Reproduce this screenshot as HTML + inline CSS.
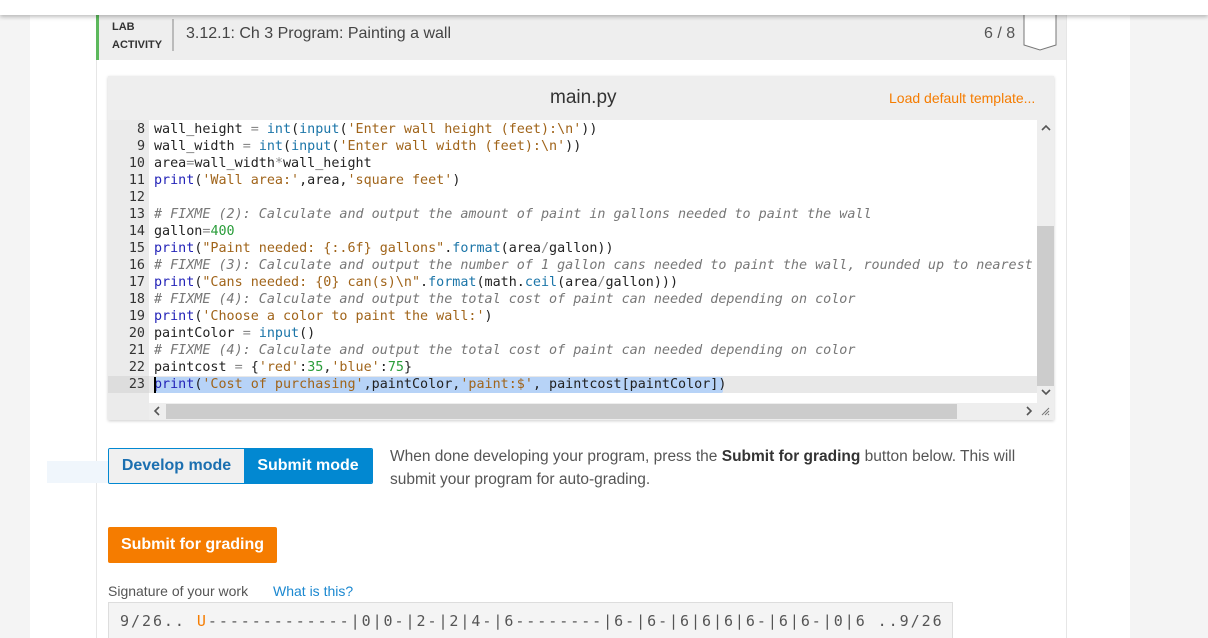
<!DOCTYPE html>
<html><head><meta charset="utf-8"><style>
*{margin:0;padding:0;box-sizing:border-box}
html,body{width:1208px;height:638px;overflow:hidden}
body{background:#f4f4f4;font-family:"Liberation Sans",sans-serif;position:relative}
.abs{position:absolute}
.topbar{left:0;top:0;width:1208px;height:15px;background:#fff;box-shadow:0 2px 4px rgba(0,0,0,.25);z-index:5}
.col{left:30px;top:0;width:1100px;height:638px;background:#fff}
.card{left:96px;top:15px;width:971px;height:623px;background:#fff;border-left:1px solid #e6e6e6;border-right:1px solid #e6e6e6}
.hdr{left:96px;top:15px;width:970px;height:45px;background:#eee;border-left:3px solid #5cb85c}
.lab{left:112px;top:18px;font-size:11px;font-weight:bold;color:#333;line-height:18px}
.sep{left:172px;top:19px;width:2px;height:32px;background:#bbb}
.title{left:186px;top:25px;font-size:16px;color:#444}
.cnt{left:984px;top:25px;font-size:16px;color:#555}
.ed{left:108px;top:76px;width:946px;height:344px;background:#eee;box-shadow:0 1px 3px rgba(0,0,0,.2)}
.code{left:108px;top:120px;width:929px;height:283px;background:#fff;overflow:hidden}
.gut{left:108px;top:120px;width:41px;height:300px;background:#ebebeb}
pre{font-family:"DejaVu Sans Mono",monospace;font-size:13.4px;line-height:17px;color:#222;white-space:pre}
.ln{left:108px;top:121px;width:37px;text-align:right;color:#333}
.src{left:154px;top:121px;width:883px;overflow:hidden}
.k{color:#2424b8}.b{color:#1b75a8}.s{color:#a0641a}.c{color:#777;font-style:italic}.n{color:#2a9d3a}.o{color:#888}
.hl{left:149px;top:376px;width:888px;height:17px;background:#e8e8e8}
.hl2{left:108px;top:376px;width:41px;height:17px;background:#ddd}
.sel{left:154px;top:377px;width:569px;height:16px;background:#b7d3f7;border-radius:2px}
.vs{left:1037px;top:120px;width:17px;height:283px;background:#eee}
.vt{left:1037px;top:226px;width:17px;height:160px;background:#ccc}
.hs{left:149px;top:403px;width:888px;height:17px;background:#eee}
.ht{left:166px;top:404px;width:791px;height:15px;background:#ccc}
.btns{left:108px;top:448px;width:265px;height:36px;border:1px solid #0288d1;border-radius:2px;overflow:hidden;display:flex}
.btns div{display:flex;align-items:center;justify-content:center;font-weight:bold;font-size:16px}
.desc{left:390px;top:445px;font-size:15.5px;color:#555;line-height:23px;width:660px}
.sub{left:108px;top:527px;width:169px;height:36px;background:#f57c00;color:#fff;font-weight:bold;font-size:16px;display:flex;align-items:center;justify-content:center;border-radius:2px}
.sig{left:108px;top:583px;font-size:14px;color:#555}
.what{left:273px;top:583px;font-size:14px;color:#1b88d0}
.sigbox{left:108px;top:602px;width:845px;height:40px;background:#f4f4f4;border:1px solid #ddd}
.sigt{left:120px;top:612px;font-family:"DejaVu Sans Mono",monospace;font-size:15px;color:#555;letter-spacing:1.95px;white-space:pre}
</style></head><body>
<div class="abs col"></div>
<div class="abs card"></div>
<div class="abs topbar"></div>
<div class="abs hdr"></div>
<div class="abs lab">LAB<br>ACTIVITY</div>
<div class="abs sep"></div>
<div class="abs title">3.12.1: Ch 3 Program: Painting a wall</div>
<div class="abs cnt">6 / 8</div>
<svg class="abs" style="left:1022px;top:15px" width="36" height="38"><path d="M2 0 V30 L18 35 L34 30 V0" fill="#fff" stroke="#777" stroke-width="1"/></svg>
<div class="abs ed"></div>
<div class="abs" style="left:550px;top:87px;font-size:19px;color:#333">main.py</div>
<div class="abs" style="left:889px;top:90px;font-size:14px;color:#f57c00">Load default template...</div>
<div class="abs code"></div>
<div class="abs gut"></div>
<div class="abs hl"></div><div class="abs hl2"></div>
<div class="abs sel"></div>
<pre class="abs ln">8
9
10
11
12
13
14
15
16
17
18
19
20
21
22
23</pre>
<pre class="abs src">wall_height <span class="o">=</span> <span class="b">int</span>(<span class="b">input</span>(<span class="s">'Enter wall height (feet):\n'</span>))
wall_width <span class="o">=</span> <span class="b">int</span>(<span class="b">input</span>(<span class="s">'Enter wall width (feet):\n'</span>))
area<span class="o">=</span>wall_width<span class="o">*</span>wall_height
<span class="k">print</span>(<span class="s">'Wall area:'</span>,area,<span class="s">'square feet'</span>)

<span class="c"># FIXME (2): Calculate and output the amount of paint in gallons needed to paint the wall</span>
gallon<span class="o">=</span><span class="n">400</span>
<span class="k">print</span>(<span class="s">"Paint needed: {:.6f} gallons"</span>.<span class="b">format</span>(area<span class="o">/</span>gallon))
<span class="c"># FIXME (3): Calculate and output the number of 1 gallon cans needed to paint the wall, rounded up to nearest i</span>
<span class="k">print</span>(<span class="s">"Cans needed: {0} can(s)\n"</span>.<span class="b">format</span>(math.<span class="b">ceil</span>(area<span class="o">/</span>gallon)))
<span class="c"># FIXME (4): Calculate and output the total cost of paint can needed depending on color</span>
<span class="k">print</span>(<span class="s">'Choose a color to paint the wall:'</span>)
paintColor <span class="o">=</span> <span class="b">input</span>()
<span class="c"># FIXME (4): Calculate and output the total cost of paint can needed depending on color</span>
paintcost <span class="o">=</span> {<span class="s">'red'</span>:<span class="n">35</span>,<span class="s">'blue'</span>:<span class="n">75</span>}
<span class="k">print</span>(<span class="s">'Cost of purchasing'</span>,paintColor,<span class="s">'paint:$'</span>, paintcost[paintColor])</pre>
<div class="abs" style="left:154px;top:377px;width:2px;height:16px;background:#000"></div>
<div class="abs vs"></div><div class="abs vt"></div>
<svg class="abs" style="left:1040px;top:122px" width="12" height="10"><path d="M2 8 L6 4 L10 8" fill="none" stroke="#555" stroke-width="1.6"/></svg>
<svg class="abs" style="left:1040px;top:388px" width="12" height="10"><path d="M2 2 L6 6 L10 2" fill="none" stroke="#555" stroke-width="1.6"/></svg>
<div class="abs hs"></div><div class="abs ht"></div>
<svg class="abs" style="left:152px;top:405px" width="10" height="12"><path d="M7 2 L3 6 L7 10" fill="none" stroke="#555" stroke-width="1.6"/></svg>
<svg class="abs" style="left:1024px;top:405px" width="10" height="12"><path d="M3 2 L7 6 L3 10" fill="none" stroke="#555" stroke-width="1.6"/></svg>
<svg class="abs" style="left:1040px;top:406px" width="10" height="10"><path d="M2 9 L9 2 M5 9 L9 5 M8 9 L9 8" stroke="#777" stroke-width="1"/></svg>
<div class="abs" style="left:47px;top:461px;width:173px;height:22px;background:#f0f6fc"></div>
<div class="abs btns"><div style="width:135px;background:#f0f0f0;color:#1b6fb0">Develop mode</div><div style="flex:1;background:#0288d1;color:#fff">Submit mode</div></div>
<div class="abs desc">When done developing your program, press the <b style="color:#333">Submit for grading</b> button below. This will submit your program for auto-grading.</div>
<div class="abs sub">Submit for grading</div>
<div class="abs sig">Signature of your work</div>
<div class="abs what">What is this?</div>
<div class="abs sigbox"></div>
<div class="abs sigt">9/26.. <span style="color:#f57c00">U</span>-------------|0|0-|2-|2|4-|6--------|6-|6-|6|6|6|6-|6|6-|0|6 ..9/26</div>
</body></html>
